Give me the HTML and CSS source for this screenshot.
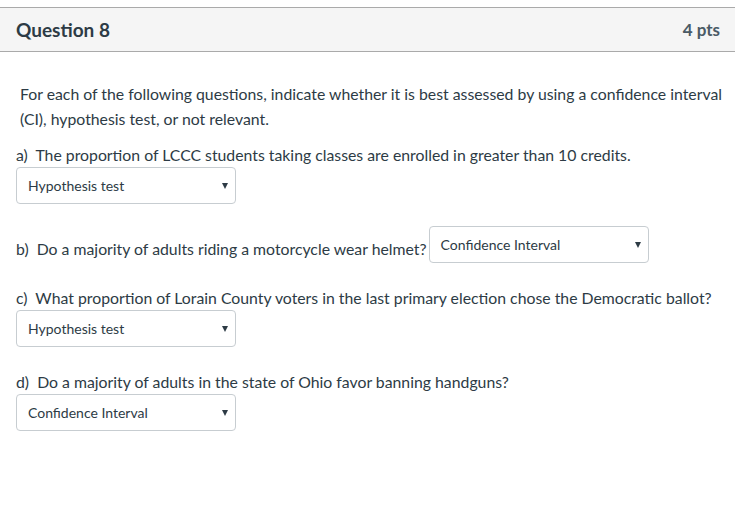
FILE: index.html
```html
<!DOCTYPE html>
<html>
<head>
<meta charset="utf-8">
<link rel="stylesheet" href="styles.css">
</head>
<body>
<div class="question">
  <div class="header">
    <div class="title">Question 8</div>
    <div class="pts">4 pts</div>
  </div>
  <div class="content">
    <p class="intro">For each of the following questions, indicate whether it is best assessed by using a confidence interval (CI), hypothesis test, or not relevant.</p>
    <div class="item item-first">
      <p class="prompt">a)&nbsp; The proportion of LCCC students taking classes are enrolled in greater than 10 credits.</p>
      <div class="select"><span class="value">Hypothesis test</span><span class="arrow"></span></div>
    </div>
    <div class="item item-inline">
      <span class="prompt-inline">b)&nbsp; Do a majority of adults riding a motorcycle wear helmet?</span>
      <div class="select select-inline"><span class="value">Confidence Interval</span><span class="arrow"></span></div>
    </div>
    <div class="item">
      <p class="prompt">c)&nbsp; What proportion of Lorain County voters in the last primary election chose the Democratic ballot?</p>
      <div class="select"><span class="value">Hypothesis test</span><span class="arrow"></span></div>
    </div>
    <div class="item">
      <p class="prompt">d)&nbsp; Do a majority of adults in the state of Ohio favor banning handguns?</p>
      <div class="select"><span class="value">Confidence Interval</span><span class="arrow"></span></div>
    </div>
  </div>
</div>
</body>
</html>
```
FILE: styles.css
```css
html, body {
  margin: 0;
  padding: 0;
  background: #ffffff;
}
body {
  font-family: Lato, "Open Sans", "Liberation Sans", sans-serif;
  color: #2d3b45;
}
.question {
  margin-top: 7px;
  margin-left: -1px;
  width: 735px;
  border: 1px solid #aaaaaa;
  border-bottom: none;
  min-height: 520px;
}
.header {
  height: 43px;
  background: #f5f5f5;
  border-bottom: 1px solid #aaaaaa;
  display: flex;
  align-items: center;
  justify-content: space-between;
  padding: 0 15px 0 16px;
}
.title {
  font-size: 19px;
  font-weight: 700;
}
.pts {
  font-size: 17px;
  font-weight: 700;
  color: #4a5a66;
}
.content {
  padding: 29px 0 0 16px;
  font-size: 15.8px;
  line-height: 25px;
}
.intro {
  margin: 0 0 11px 0;
  padding-left: 4px;
}
.prompt {
  margin: 0;
}
.item {
  margin-bottom: 22px;
}
.item-inline {
  display: flex;
  align-items: flex-start;
}
.prompt-inline {
  margin-top: 10px;
  margin-right: 2px;
}
.select {
  box-sizing: border-box;
  width: 220px;
  height: 37px;
  border: 1px solid #c7cdd1;
  border-radius: 4px;
  display: flex;
  align-items: center;
  justify-content: space-between;
  padding: 0 7px 0 11px;
  font-size: 14px;
  background: #fff;
}
.select-inline {
  display: inline-flex;
}
.arrow {
  width: 0;
  height: 0;
  border-left: 3px solid transparent;
  border-right: 3px solid transparent;
  border-top: 6px solid #2d3b45;
}
```
